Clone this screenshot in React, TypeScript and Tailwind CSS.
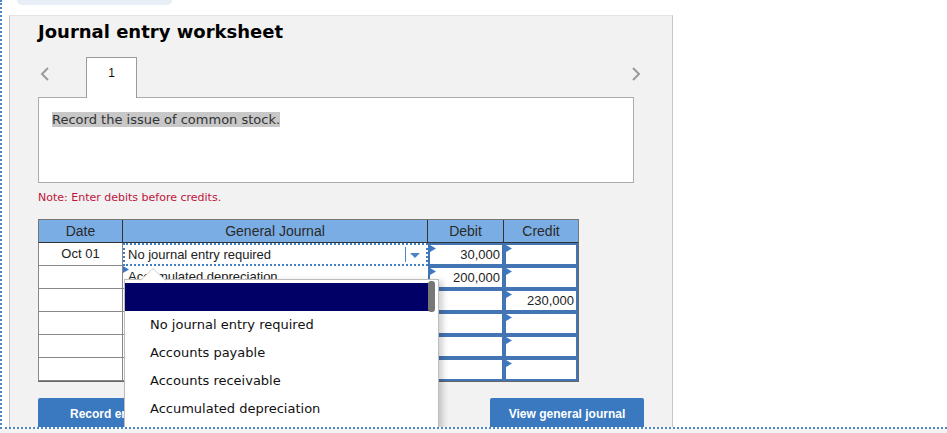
import React from 'react';

type Row = { date: string; account: string; debit: string; credit: string };

const rows: Row[] = [
  { date: 'Oct 01', account: 'No journal entry required', debit: '30,000', credit: '' },
  { date: '', account: 'Accumulated depreciation', debit: '200,000', credit: '' },
  { date: '', account: '', debit: '', credit: '230,000' },
  { date: '', account: '', debit: '', credit: '' },
  { date: '', account: '', debit: '', credit: '' },
  { date: '', account: '', debit: '', credit: '' },
];

const options = ['No journal entry required', 'Accounts payable', 'Accounts receivable', 'Accumulated depreciation'];

function Flag() {
  return (
    <svg className="absolute left-0 top-0" width="6" height="8" viewBox="0 0 6 8">
      <path d="M0 0L6 3.5L0 7Z" fill="#3b78c4" />
    </svg>
  );
}

function Chevron({ dir }: { dir: 'left' | 'right' }) {
  return (
    <svg className="block" width="10" height="16" viewBox="0 0 10 16">
      <path
        d={dir === 'left' ? 'M8 2L2 8L8 14' : 'M2 2L8 8L2 14'}
        fill="none"
        stroke="#9a9a9a"
        strokeWidth="2"
      />
    </svg>
  );
}

export default function App() {
  return (
    <div className="w-[947px] h-[433px] bg-white overflow-hidden font-['DejaVu_Sans',sans-serif]">
      {/* Frame with dotted edges */}
      <div className="relative h-[429px] border-l-2 border-b-2 border-dotted border-[#4a86c8] overflow-hidden">
        <div className="ml-[15px] w-[155px] h-[5px] rounded-b-[6px] bg-[#e8eef6]" />

        {/* Gray worksheet panel */}
        <div className="ml-[7px] mt-[10px] w-[664px] h-[420px] bg-[#f2f2f2] border-l border-r border-t border-l-[#c6c6c6] border-r-[#c6c6c6] border-t-[#e4e4e4] pl-[28px]">
          <h1 className="pt-[5px] text-[18px] leading-[22px] font-bold text-black">Journal entry worksheet</h1>

          {/* Tabs */}
          <div className="mt-[14px] flex items-start w-[603px] h-[41px]">
            <div className="w-[48px] mt-[9px] pl-[2px]">
              <Chevron dir="left" />
            </div>
            <div className="relative z-10 w-[51px] h-[41px] bg-white border border-b-0 border-[#9a9a9a] flex items-start justify-center pt-[7px] text-[12px] leading-[16px] font-['Liberation_Sans',sans-serif] text-[#111]">
              1
            </div>
            <div className="ml-auto mt-[9px]">
              <Chevron dir="right" />
            </div>
          </div>

          {/* Question box */}
          <div className="-mt-px w-[596px] h-[86px] bg-white border border-[#adadad] pl-[13px] pt-[13px] text-[13px] leading-[18px]">
            <span className="bg-[#c8c8c8] text-[#333]">Record the issue of common stock.</span>
          </div>

          <p className="mt-[7px] text-[11px] leading-[16px] text-[#c0143c]">Note: Enter debits before credits.</p>

          {/* Journal table */}
          <div className="relative mt-[13px] w-[541px] font-['Liberation_Sans',sans-serif] text-[13px] leading-[16px] text-[#222]">
            <div className="flex h-[24px] bg-[#7aade3] border border-[#777] border-b-[#333] text-[14px] text-[#2a2a2a]">
              <div className="w-[84px] flex items-center justify-center border-r border-[#333]">Date</div>
              <div className="w-[305px] flex items-center justify-center border-r border-[#333]">General Journal</div>
              <div className="w-[76px] flex items-center justify-center border-r border-[#333]">Debit</div>
              <div className="flex-1 flex items-center justify-center">Credit</div>
            </div>
            <div className="border-r border-b border-[#666]">
              {rows.map((r, i) => (
                <div key={i} className="flex h-[23px]">
                  <div className="w-[85px] h-[23px] bg-white border-l border-b border-r border-[#888] flex items-center justify-center">
                    {r.date}
                  </div>
                  {i === 0 ? (
                    <div className="relative w-[305px] h-[23px] bg-white border-2 border-dotted border-[#3f7fc8] flex items-center pl-[3px]">
                      <span>{r.account}</span>
                      <div className="absolute right-[20px] top-[2px] bottom-[2px] w-px bg-[#4d84c4]" />
                      <svg className="absolute right-[6px] top-[8px]" width="10" height="5" viewBox="0 0 10 5">
                        <path d="M0 0H10L5 5Z" fill="#4d84c4" />
                      </svg>
                    </div>
                  ) : (
                    <div className="relative w-[305px] h-[23px] bg-white border-b border-[#888] flex items-center pl-[5px]">
                      {r.account && <Flag />}
                      <span>{r.account}</span>
                    </div>
                  )}
                  <div className="relative w-[76px] h-[23px] bg-white border-2 border-[#4374b4] flex items-center justify-end pr-[2px]">
                    <Flag />
                    {r.debit}
                  </div>
                  <div className="relative w-[74px] h-[23px] bg-white border-2 border-[#4374b4] flex items-center justify-end pr-[2px]">
                    <Flag />
                    {r.credit}
                  </div>
                </div>
              ))}
            </div>

            {/* Open account dropdown */}
            <div className="absolute left-[86px] top-[60px] w-[315px] h-[170px] z-20 bg-white border border-[#bdbdbd] shadow-[4px_2px_6px_rgba(0,0,0,0.18)] font-['DejaVu_Sans',sans-serif]">
              <svg className="absolute left-[15px] -top-[12px]" width="26" height="13" viewBox="0 0 26 13">
                <path d="M0.5 12.5L13 0.5L25.5 12.5" fill="white" stroke="#cfcfcf" />
              </svg>
              <div className="mt-[3px] h-[28px] bg-[#000066] mr-[9px]" />
              <div className="absolute right-[3px] top-[1px] w-[7px] h-[31px] rounded-[3px] bg-[#777]" />
              {options.map((o) => (
                <div key={o} className="h-[28px] flex items-center pl-[25px] text-[13px] text-[#111]">
                  {o}
                </div>
              ))}
            </div>
          </div>

          {/* Buttons */}
          <div className="mt-[16px] flex w-[606px] font-['Liberation_Sans',sans-serif] text-[12px] font-bold text-white">
            <button className="h-[31px] px-[32px] rounded-t-[2px] bg-[#3a78bf]">Record entry</button>
            <button className="ml-auto h-[31px] w-[154px] rounded-t-[2px] bg-[#3a78bf]">View general journal</button>
          </div>
        </div>
      </div>
      <div className="h-[4px] bg-[#f3f3f3]" />
    </div>
  );
}
